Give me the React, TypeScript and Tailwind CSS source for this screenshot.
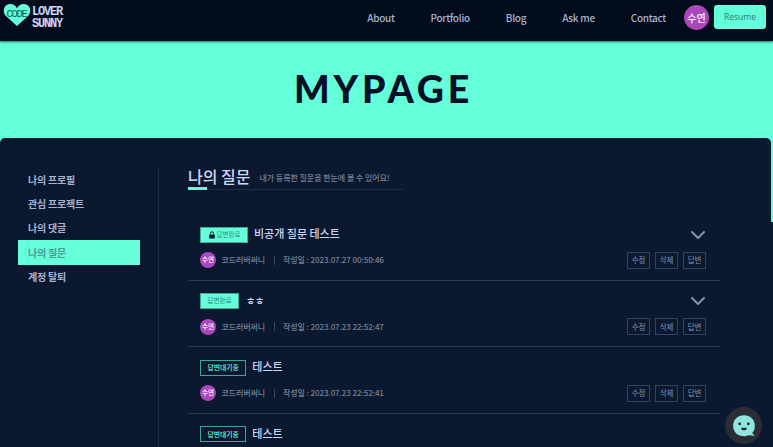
import { ChevronDown } from "lucide-react";

const navLinks = ["About", "Portfolio", "Blog", "Ask me", "Contact"];
const menus = ["나의 프로필", "관심 프로젝트", "나의 댓글", "나의 질문", "계정 탈퇴"];

const questions = [
  { done: true, locked: true, title: "비공개 질문 테스트", date: "2023.07.27 00:50:46" },
  { done: true, locked: false, title: "ㅎㅎ", date: "2023.07.23 22:52:47" },
  { done: false, locked: false, title: "테스트", date: "2023.07.23 22:52:41" },
  { done: false, locked: false, title: "테스트", date: "2023.07.23 22:52:41" },
];

const fontStack = "font-['Noto_Sans_CJK_KR','Noto_Sans',sans-serif]";

function Avatar() {
  return (
    <span className="flex h-[16px] w-[16px] shrink-0 items-center justify-center rounded-full bg-[#ab47bc] text-[6.5px] font-medium text-white">
      수연
    </span>
  );
}

function Logo() {
  return (
    <div className="flex items-start gap-[1px]">
      <div className="relative mt-[-2px] h-[24px] w-[28px]">
        <svg viewBox="0 0 29 24" className="h-full w-full">
          <path
            d="M14.5 23.5 L3 13 C0 10 0 4.5 3.5 2 C7 -0.5 12 0.5 14.5 5 C17 0.5 22 -0.5 25.5 2 C29 4.500 29 10 26 13 Z"
            fill="#64ffda"
          />
        </svg>
        <span className="absolute left-[3.500px] top-[5.500px] font-['Liberation_Mono',monospace] text-[10.500px] leading-[12px] tracking-[-1.300px] text-[#0d5c55]">
          CODE
        </span>
      </div>
      <div className="mt-[1px] flex flex-col items-end font-['Liberation_Mono',monospace] text-[12px] font-bold leading-[12px] tracking-[-1.200px] text-[#ccd6f6]">
        <span>LOVER</span>
        <span>SUNNY</span>
      </div>
    </div>
  );
}

function Header() {
  return (
    <header className="flex h-[41px] items-center justify-between bg-[#020c1b] pb-[7px] pl-[3px] pr-[7px] shadow-[0_1px_2px_#1f6f66]">
      <Logo />
      <div className="flex items-center">
        <nav className="flex items-center gap-[36px] text-[10px] font-medium tracking-[-0.3px] text-[#a8b2d1]">
          {navLinks.map((link) => (
            <a key={link}>{link}</a>
          ))}
        </nav>
        <span className="ml-[18px] flex h-[25px] w-[25px] items-center justify-center rounded-full bg-[#ab47bc] text-[10px] font-medium text-white">
          수연
        </span>
        <button className="ml-[5px] h-[24px] w-[52px] rounded-[3px] bg-[#64ffda] font-['Noto_Sans',sans-serif] text-[8.5px] text-[#2f8079]">
          Resume
        </button>
      </div>
    </header>
  );
}

function Sidebar() {
  return (
    <aside className="w-[140px] pl-[18px]">
      <ul className="flex flex-col text-[10px] font-bold tracking-[-0.2px] text-[#a8b2d1]">
        {menus.map((menu) => (
          <li
            key={menu}
            className={
              "flex h-[24.4px] items-center pl-[10px] " +
              (menu === "나의 질문" ? "bg-[#64ffda] text-[#4a9a94]" : "")
            }
          >
            {menu}
          </li>
        ))}
      </ul>
    </aside>
  );
}

function QuestionRow({ q }: { q: (typeof questions)[number] }) {
  return (
    <li className="flex h-[66.500px] flex-col border-b border-[#2d3a52] px-[12px] pt-[12.500px]">
      <div className="flex h-[16px] items-center">
        {q.done ? (
          <span className="flex h-[16px] items-center gap-[1px] border border-[#3aa893] bg-[#64ffda] px-[6.500px] text-[6.500px] text-[#2a8f80]">
            {q.locked && (
              <svg viewBox="0 0 10 10" className="h-[8px] w-[8px]">
                <path d="M3 4.500V3a2 2 0 0 1 4 0v1.500" fill="none" stroke="#0a192f" strokeWidth="1.2" />
                <rect x="1.500" y="4.500" width="7" height="5" rx="0.8" fill="#0a192f" />
              </svg>
            )}
            답변완료
          </span>
        ) : (
          <span className="flex h-[16px] items-center border border-[#3aa893] px-[6.500px] text-[6.800px] font-medium text-[#64ffda]">
            답변대기중
          </span>
        )}
        <span
          className={
            q.title === "ㅎㅎ"
              ? "ml-[7px] mt-[-2px] text-[10px] font-bold text-[#ccd6f6]"
              : "ml-[6px] mt-[-2px] text-[11px] font-medium text-[#ccd6f6]"
          }
        >
          {q.title}
        </span>
        {q.done && <ChevronDown className="ml-auto mr-[-2px] h-[24px] w-[24px] text-[#8892b0]" strokeWidth={2} />}
      </div>
      <div className="mt-[9px] flex items-center text-[8px] font-medium tracking-[-0.1px] text-[#76819a]">
        <Avatar />
        <span className="ml-[5.500px]">코드러버써니</span>
        <span className="mx-[8.500px] h-[9px] w-px bg-[#3a4760]" />
        <span>작성일 : {q.date}</span>
        <div className="ml-auto mr-[2px] flex gap-[5px]">
          {["수정", "삭제", "답변"].map((label) => (
            <span
              key={label}
              className="flex h-[17px] w-[23px] items-center justify-center border border-[#35425a] text-[7.5px] font-normal text-[#8892b0]"
            >
              {label}
            </span>
          ))}
        </div>
      </div>
    </li>
  );
}

function App() {
  return (
    <div className={"relative h-[447px] w-[773px] overflow-hidden bg-[#64ffda] " + fontStack}>
      <Header />
      <section className="flex h-[97px] items-center justify-center pr-[6px]">
        <h1 className="font-['Lato',sans-serif] text-[37.500px] font-black tracking-[3.8px] text-[#050f26]">MYPAGE</h1>
      </section>
      <main className="mr-[2px] flex h-[309px] rounded-t-[5px] bg-[#0a192f] pt-[29px]">
        <Sidebar />
        <div className="ml-[18px] w-px self-stretch bg-[#1c2b45]" />
        <div className="ml-[29px] flex-1 pr-[51px]">
          <div className="relative flex w-[215px] items-end gap-[9px] border-b border-[#1c2b45] pb-[3px]">
            <h2 className="mt-[-1px] text-[16px] font-medium leading-[20px] text-[#ccd6f6]">나의 질문</h2>
            <span className="pb-[2px] text-[8px] font-medium tracking-[-0.05px] text-[#76819a]">내가 등록한 질문을 한눈에 볼 수 있어요!</span>
            <span className="absolute bottom-[-1px] left-0 h-[3px] w-[19px] bg-[#64ffda]" />
          </div>
          <ul className="mt-[24px]">
            {questions.map((q, i) => (
              <QuestionRow key={i} q={q} />
            ))}
          </ul>
        </div>
      </main>
      {/* dark part of the scrollbar track, below the mint thumb */}
      <div className="absolute bottom-0 right-0 h-[225px] w-[2px] bg-[#0a192f]" />
      <div className="absolute bottom-[3px] right-[11px] flex h-[37px] w-[37px] items-center justify-center rounded-full bg-[#2a2d33]">
        <svg viewBox="0 0 24 24" className="h-[26px] w-[26px]">
          <path d="M12 2 C18 2 22 6 22 12 C22 15 21 17 19.500 18.500 L22 21 L16 20.500 C14.500 21.300 13.500 21.500 12 21.500 C6 21.500 2 17.500 2 12 C2 6 6 2 12 2 Z" fill="#8fe6dc" />
          <circle cx="8" cy="10" r="1.300" fill="#123" />
          <circle cx="16" cy="10" r="1.300" fill="#123" />
          <path d="M9.500 13.500 a2.500 2.500 0 0 0 5 0 Z" fill="#123" />
        </svg>
      </div>
    </div>
  );
}

export default App;
